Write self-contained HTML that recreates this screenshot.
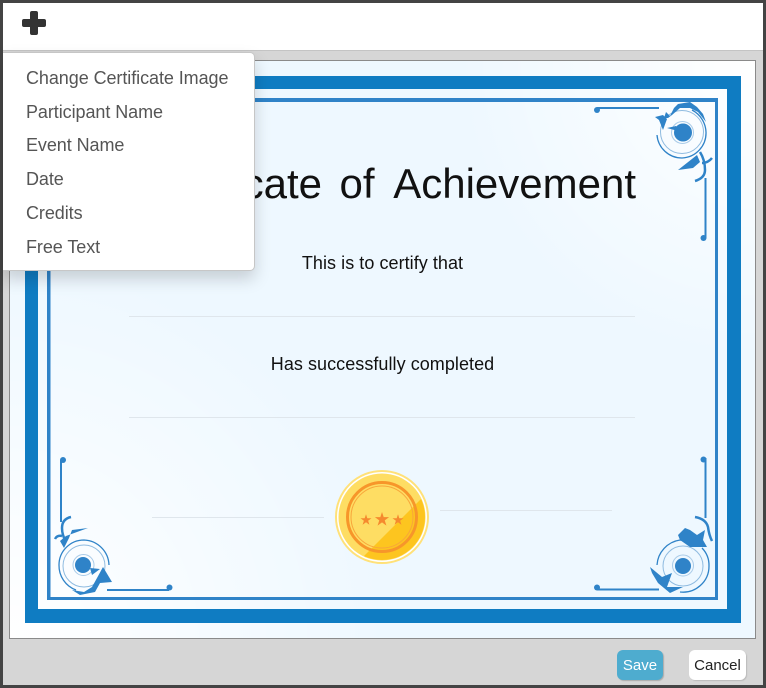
<!DOCTYPE html>
<html><head><meta charset="utf-8"><style>
html,body{margin:0;padding:0}
body{width:766px;height:688px;overflow:hidden;position:relative;background:#d6d6d6;font-family:"Liberation Sans",sans-serif}
.b{position:absolute;background:#444}
#tb{position:absolute;left:3px;top:3px;width:760px;height:47px;background:#fff;box-shadow:0 1px 0 #c4c4c4}
#menu{position:absolute;left:3px;top:52px;width:252px;height:219px;background:#fff;border:1px solid rgba(0,0,0,.22);border-left:0;border-radius:0 5px 5px 0;box-sizing:border-box;box-shadow:0 8px 16px rgba(0,0,0,.17)}
#menu div{position:absolute;left:23px;font-size:18px;line-height:24px;color:#555;letter-spacing:-.07px;white-space:nowrap}
.btn{position:absolute;top:650px;height:30px;line-height:32px;text-align:center;font-size:15px;border-radius:6px;box-sizing:border-box}
</style></head><body>
<svg style="position:absolute;left:9px;top:50px" width="748" height="589" viewBox="9 50 748 589" font-family="Liberation Sans, sans-serif">
<defs>
<radialGradient id="w1" gradientUnits="userSpaceOnUse" cx="756" cy="60" r="300"><stop offset="0" stop-color="#fff"/><stop offset="1" stop-color="#fff" stop-opacity="0"/></radialGradient>
<radialGradient id="w2" gradientUnits="userSpaceOnUse" cx="9" cy="638" r="380"><stop offset="0" stop-color="#fff"/><stop offset="1" stop-color="#fff" stop-opacity="0"/></radialGradient>
<clipPath id="mc"><circle cx="382" cy="517" r="43"/></clipPath></defs>
<rect x="9.5" y="60.500" width="746" height="578" fill="#eef8ff"/>
<rect x="9.5" y="60.500" width="746" height="578" fill="url(#w1)"/>
<rect x="9.5" y="60.500" width="746" height="578" fill="url(#w2)"/>
<rect x="9.5" y="60.500" width="746" height="578" fill="none" stroke="#8a8a8a"/>
<path fill="#0f7cc2" fill-rule="evenodd" d="M25 76H741V623H25ZM38 89V609H727V89Z"/>
<path fill="#2f83c8" fill-rule="evenodd" d="M47 98H718V600H47ZM50.500 102V597H715V102Z"/>
<g stroke="#dfe6ec" stroke-width="1" fill="none"><path d="M129 316.500H635M129 417.500H635M152 517.500H324M440 510.500H612"/></g>
<g font-size="42" fill="#111">
<text x="322" y="198" text-anchor="end">Certificate</text>
<text x="339.500" y="198">of</text>
<text x="636" y="198" text-anchor="end">Achievement</text>
</g>
<text x="382.500" y="269" text-anchor="middle" font-size="18" letter-spacing=".05" fill="#111">This is to certify that</text>
<text x="382.500" y="370" text-anchor="middle" font-size="18" letter-spacing=".05" fill="#111">Has successfully completed</text>
<!-- medal -->
<circle cx="382" cy="517" r="46" fill="#fff" stroke="#ffe179" stroke-width="2"/>
<circle cx="382" cy="517" r="43.500" fill="#fedd63"/>
<path clip-path="url(#mc)" fill="#fdc51f" d="M425 495L361 559L440 580V480Z"/>
<circle cx="382" cy="517" r="34.500" fill="none" stroke="#f7962a" stroke-width="3"/>
<circle cx="382" cy="517" r="31" fill="none" stroke="#f8a63a" stroke-width="1"/>
<g fill="#f58a2e">
<path transform="translate(366,520) scale(5.800)" d="M0 -1L.225 -.31H.95L.365 .12L.59 .81L0 .38L-.59 .81L-.365 .12L-.95 -.31H-.225Z"/>
<path transform="translate(382,519.500) scale(7.500)" d="M0 -1L.225 -.31H.95L.365 .12L.59 .81L0 .38L-.59 .81L-.365 .12L-.95 -.31H-.225Z"/>
<path transform="translate(398,520) scale(5.800)" d="M0 -1L.225 -.31H.95L.365 .12L.59 .81L0 .38L-.59 .81L-.365 .12L-.95 -.31H-.225Z"/>
</g>
<!-- top right corner -->
<g fill="#2f83c8">
<path stroke="#2f83c8" stroke-width="2" d="M597 108H659M705.500 178V238"/>
<circle cx="597" cy="110" r="3"/><circle cx="703.500" cy="238" r="3"/>
<circle cx="683" cy="132.500" r="9"/>
<circle cx="682.500" cy="132.500" r="11" fill="none" stroke="#a9cbe8"/>
<circle cx="682" cy="132" r="21.500" fill="none" stroke="#8fbbe0" stroke-width="1"/>
<path fill="none" stroke="#2f83c8" stroke-width="1.300" d="M657 135A25 25 0 0 0 682 158A25 25 0 0 0 706 132A26 26 0 0 0 692 110"/>
<path d="M667 128L676 126L678 131ZM655 117L663 115L667 119L663 130L659 120ZM664 118L666 112L670 116L674 108L678 104L690 102L697 107L703 114L706 122L698 112L690 108L680 108L672 115L668 118Z"/>
<path d="M678 170L697 155L700 162L693 168Z"/>
<path fill="none" stroke="#2f83c8" stroke-width="2.500" d="M695 181Q705 178 705 170Q705 160 700 152M712 158Q708 163 702 163"/>
</g>
<!-- bottom right corner -->
<g fill="#2f83c8">
<path stroke="#2f83c8" stroke-width="2" d="M597 589.500H659M705.500 458V518"/>
<circle cx="597" cy="587.500" r="3"/><circle cx="703.500" cy="459.500" r="3"/>
<circle cx="683" cy="566" r="8"/>
<circle cx="683" cy="565.500" r="10.500" fill="none" stroke="#a9cbe8"/>
<circle cx="683" cy="566" r="20" fill="none" stroke="#8fbbe0"/>
<path fill="none" stroke="#2f83c8" stroke-width="1.300" d="M657 565A27 27 0 0 1 680 540L692 541M702 548A25 25 0 0 1 709 566A26 26 0 0 1 680 592"/>
<path d="M678 535L685 528L690 530L697 535L705 530L703 540L707 547L690 547L680 540ZM650 567L662 577L672 573L667 587L683 587L670 593L658 583L652 573Z"/>
<path fill="none" stroke="#2f83c8" stroke-width="2.500" d="M695 517Q706 519 708 527Q709 535 712 541"/>
</g>
<!-- bottom left corner -->
<g fill="#2f83c8">
<path stroke="#2f83c8" stroke-width="2" d="M61 460V522M107 590H169"/>
<circle cx="63" cy="460" r="3"/><circle cx="169.500" cy="587.500" r="3"/>
<circle cx="83" cy="565" r="8"/>
<circle cx="83.500" cy="565" r="10.500" fill="none" stroke="#a9cbe8"/>
<circle cx="84" cy="566" r="21" fill="none" stroke="#8fbbe0"/>
<path fill="none" stroke="#2f83c8" stroke-width="1.300" d="M109 565A26 26 0 0 0 84 540A25 25 0 0 0 59 565A26 26 0 0 0 76 590"/>
<path d="M88 528L72 530L69 538L64 548L60 541L66 536ZM90 568L100 569L92 575ZM103 567L112 582L100 583L95 592L80 595L72 590L84 592L92 587L97 578Z"/>
<path fill="none" stroke="#2f83c8" stroke-width="2.500" d="M71 517Q62 519 62 528Q62 535 66 542M55 539Q57 535 62 536"/>
</g>
</svg>
<div class="b" style="left:0;top:0;width:766px;height:3px"></div>
<div class="b" style="left:0;top:685px;width:766px;height:3px"></div>
<div class="b" style="left:0;top:0;width:3px;height:688px"></div>
<div class="b" style="left:763px;top:0;width:3px;height:688px"></div>
<div id="tb"><svg width="30" height="30" style="position:absolute;left:16px;top:5px"><path fill="#333" d="M11 5Q11 3 13 3H17Q19 3 19 5V11H25Q27 11 27 13V17Q27 19 25 19H19V25Q19 27 17 27H13Q11 27 11 25V19H5Q3 19 3 17V13Q3 11 5 11H11Z"/></svg></div>
<div id="menu">
<div style="top:13px">Change Certificate Image</div>
<div style="top:47px">Participant Name</div>
<div style="top:80px">Event Name</div>
<div style="top:114px">Date</div>
<div style="top:148px">Credits</div>
<div style="top:182px">Free Text</div>
</div>
<div class="btn" style="left:617px;width:46px;background:#4eaccf;color:#fff;box-shadow:1px 1px 1px #aaa">Save</div>
<div class="btn" style="left:689px;width:57px;background:#fff;color:#222;box-shadow:1px 1px 1px #bbb">Cancel</div>
</body></html>
